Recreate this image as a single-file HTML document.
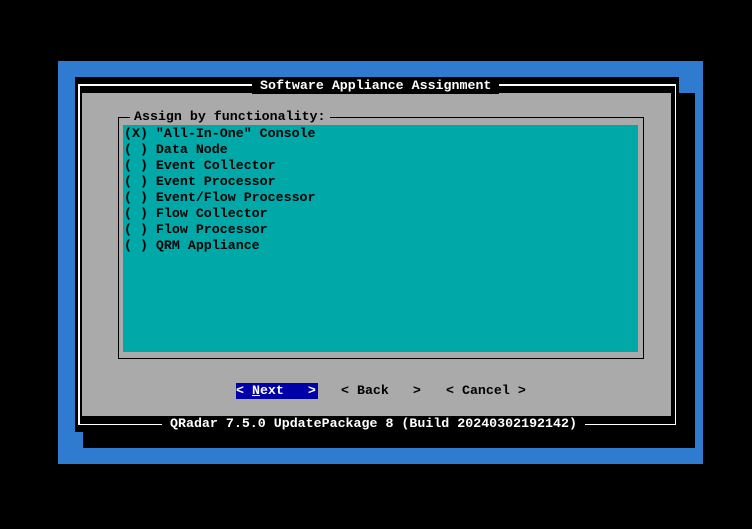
<!DOCTYPE html>
<html><head><style>
body{margin:0;width:752px;height:529px;background:#000;position:relative;overflow:hidden;font-family:"Liberation Mono","DejaVu Sans Mono",monospace;font-weight:bold;font-size:13.3px}
div{position:absolute;box-sizing:border-box}
.t{white-space:pre;line-height:16px;color:#000;letter-spacing:0}
</style></head><body>
<div style="left:58px;top:61px;width:645px;height:403px;background:#2f7bd0"></div>
<div style="left:83px;top:93px;width:612px;height:355px;background:#000"></div>
<div style="left:75px;top:77px;width:604px;height:355px;background:#000"></div>
<div style="left:78px;top:84px;width:598px;height:341px;border:2px solid #fff;border-right-width:1px;border-bottom-width:1px"></div>
<div style="left:82px;top:93px;width:589px;height:323px;background:#aaa"></div>
<div style="left:118px;top:117px;width:526px;height:242px;border:1px solid #000"></div>
<div style="left:123px;top:125px;width:515px;height:227px;background:#00a8a8"></div>
<div class="t" style="left:130px;top:109px;background:#aaa;padding:0 4px">Assign by functionality:</div>
<div class="t" style="left:124px;top:126px">(X) "All-In-One" Console
( ) Data Node
( ) Event Collector
( ) Event Processor
( ) Event/Flow Processor
( ) Flow Collector
( ) Flow Processor
( ) QRM Appliance</div>
<div class="t" style="left:252px;top:78px;background:#000;color:#fff;padding:0 8px">Software Appliance Assignment</div>
<div class="t" style="left:162px;top:416px;background:#000;color:#fff;padding:0 8px">QRadar 7.5.0 UpdatePackage 8 (Build 20240302192142)</div>
<div class="t" style="left:236px;top:383px;width:82px;height:16px;background:#0000a8;color:#fff;overflow:hidden">&lt; <u>N</u>ext   &gt;</div>
<div class="t" style="left:341px;top:383px">&lt; Back   &gt;</div>
<div class="t" style="left:446px;top:383px">&lt; Cancel &gt;</div>
</body></html>
